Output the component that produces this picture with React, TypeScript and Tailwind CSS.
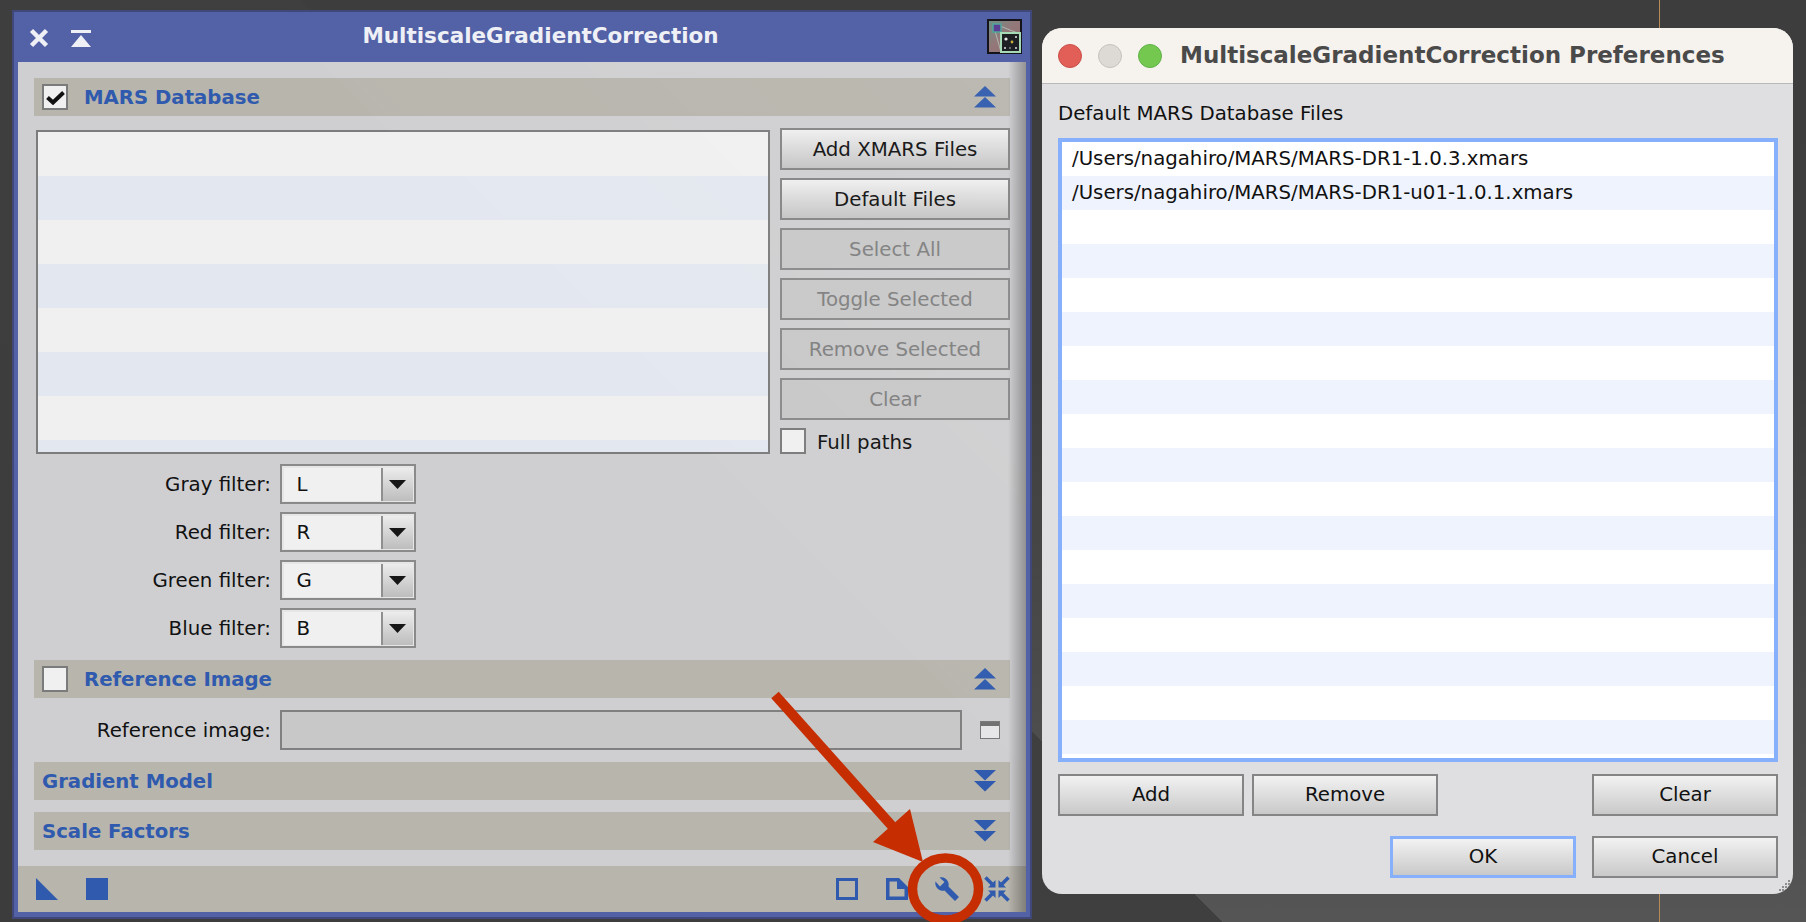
import type { ReactNode } from 'react';

function Thumbnail() {
  return (
    <svg width="35" height="35" viewBox="0 0 35 35" className="shrink-0">
      <defs>
        <linearGradient id="thumb" x1="0" y1="0" x2="1" y2="1">
          <stop offset="0" stopColor="#6f8f84" />
          <stop offset="0.45" stopColor="#93787a" />
          <stop offset="1" stopColor="#94706c" />
        </linearGradient>
      </defs>
      <rect x="0" y="0" width="35" height="35" fill="#14141a" />
      <rect x="2" y="2" width="31" height="31" fill="url(#thumb)" />
      <path d="M8 5 L33 15 M8 12 L14 33" stroke="#b9d6c8" strokeWidth="1" opacity="0.7" />
      <rect x="6" y="5" width="8" height="8" fill="#5b3f97" stroke="#4fa89a" strokeWidth="1.5" />
      <rect x="14" y="14" width="19" height="19" fill="#1d2022" stroke="#a5dab4" strokeWidth="2" />
      <circle cx="19" cy="20" r="1.6" fill="#e8e8e8" />
      <circle cx="29" cy="18" r="1" fill="#e8e8e8" />
      <circle cx="25" cy="23" r="1.4" fill="#c8b040" />
      <circle cx="18" cy="29" r="1" fill="#e0e0e0" />
      <circle cx="29" cy="29" r="1" fill="#e0e0e0" />
      <circle cx="23" cy="29" r="0.8" fill="#d0d0d0" />
    </svg>
  );
}

function Checkbox({ checked }: { checked?: boolean }) {
  return (
    <span className="flex h-[26px] w-[26px] shrink-0 items-center justify-center border-[2.5px] border-[#7b7b7b] bg-[#f0f0f0]">
      {checked && (
        <svg width="21" height="21" viewBox="0 0 21 21">
          <path d="M2.5 10.5 L8 15.5 L18.5 5.5" fill="none" stroke="#111" strokeWidth="4" />
        </svg>
      )}
    </span>
  );
}

function SectionBar({ title, open, checkbox }: { title: string; open?: boolean; checkbox?: 'on' | 'off' }) {
  return (
    <div className="flex h-[38px] shrink-0 items-center bg-[#b8b5ad] pl-2 pr-[14px]">
      {checkbox && (
        <div className="mr-[16px]">
          <Checkbox checked={checkbox === 'on'} />
        </div>
      )}
      <span className="flex-1 pt-[1px] text-[19.7px] font-bold text-[#2f5aad]">{title}</span>
      <svg width="22" height="22" viewBox="0 0 22 22" fill="#2f5aad">
        {open ? (
          <path d="M11 0 L22 10.5 L0 10.5 Z M11 11 L22 21.5 L0 21.5 Z" />
        ) : (
          <path d="M0 0 L22 0 L11 10.5 Z M0 11 L22 11 L11 21.5 Z" />
        )}
      </svg>
    </div>
  );
}

function ToolButton({ label, disabled }: { label: string; disabled?: boolean }) {
  return (
    <div
      className={
        disabled
          ? 'flex h-[42px] items-center justify-center border-[2.5px] border-[#8a8a8a] bg-[#c8c8c9] pt-[2px] text-[19.8px] text-[#808080]'
          : 'flex h-[42px] items-center justify-center border-[2.5px] border-[#858585] bg-gradient-to-b from-[#efefef] to-[#c4c4c4] pt-[2px] text-[19.8px] text-[#111]'
      }
    >
      {label}
    </div>
  );
}

function FilterRow({ label, value }: { label: string; value: string }) {
  return (
    <div className="flex h-10 items-center">
      <span className="w-[246px] pr-[9px] pt-[1px] text-right text-[19.8px] text-[#111]">{label}</span>
      <div className="flex h-10 w-[136px] border-2 border-[#8a8a8a] bg-[#e6e6e6] p-[1.5px]">
        <span className="flex-1 bg-[#f0f0f0] pl-[13px] text-[19.8px] leading-[33px] text-[#111]">{value}</span>
        <span className="flex w-[32px] items-center justify-center border-l-2 border-[#8f8f8f] bg-gradient-to-b from-[#ececec] to-[#bdbdbd]">
          <svg width="17" height="9" viewBox="0 0 17 9">
            <path d="M0 0 H17 L8.5 9 Z" fill="#161616" />
          </svg>
        </span>
      </div>
    </div>
  );
}

function PrefButton({ children, focused }: { children: ReactNode; focused?: boolean }) {
  return (
    <div
      className={
        focused
          ? 'flex h-[42px] w-[186px] items-center justify-center border-[3px] border-[#86b0fb] bg-gradient-to-b from-[#f2f2f2] to-[#c9c9c9] text-[19.75px] text-[#111]'
          : 'flex h-[42px] w-[186px] items-center justify-center border-2 border-[#858585] bg-gradient-to-b from-[#f2f2f2] to-[#c9c9c9] text-[19.75px] text-[#111]'
      }
    >
      {children}
    </div>
  );
}

const blueRow = [false, true, false, true, false, true, false, true];
const prefFiles = [
  '/Users/nagahiro/MARS/MARS-DR1-1.0.3.xmars',
  '/Users/nagahiro/MARS/MARS-DR1-u01-1.0.1.xmars',
  '', '', '', '', '', '', '', '', '', '', '', '', '', '', '', '',
];

function ProcessWindow() {
  return (
    <div className="relative flex h-[909px] w-[1020px] shrink-0 flex-col border-2 border-[#3f4878] bg-[#5361a6]">
      {/* title bar */}
      <div className="flex h-[50px] shrink-0 items-center pr-[8px] pb-[2px]">
        <div className="flex w-[80px] items-center pl-[15px]">
          <svg width="20" height="20" viewBox="0 0 20 20" className="mt-[4px]">
            <path d="M2.5 2.5 L17.5 17.5 M17.5 2.5 L2.5 17.5" stroke="#eef0f6" strokeWidth="4.5" />
          </svg>
          <svg width="20" height="17" viewBox="0 0 20 17" className="ml-[22px] mt-[4px]" fill="#eef0f6">
            <path d="M0 0 H20 V3 H0 Z M10 5 L20 17 H0 Z" />
          </svg>
        </div>
        <span className="flex-1 text-center text-[21.5px] font-bold text-[#eef0f6]">MultiscaleGradientCorrection</span>
        <Thumbnail />
      </div>

      {/* panel */}
      <div className="relative mx-1 flex flex-1 flex-col overflow-hidden bg-[#cfcfd1]">
        <div className="flex flex-1 flex-col gap-3 px-4 pt-4">
          <SectionBar title="MARS Database" open checkbox="on" />
          <div className="-mb-[2px] flex gap-[10px]">
            <div className="ml-[2px] mt-[2px] h-[324px] w-[734px] overflow-hidden border-2 border-[#7c7c7c] bg-[#f0f0f0]">
              <div className="h-[44px] bg-[#f0f0f0]" />
              {blueRow.map((isBlue, i) => (
                <div key={i} className={isBlue ? 'h-[44px] bg-[#f0f0f0]' : 'h-[44px] bg-[#e3e7ef]'} />
              ))}
            </div>
            <div className="flex w-[230px] flex-col gap-2">
              <ToolButton label="Add XMARS Files" />
              <ToolButton label="Default Files" />
              <ToolButton label="Select All" disabled />
              <ToolButton label="Toggle Selected" disabled />
              <ToolButton label="Remove Selected" disabled />
              <ToolButton label="Clear" disabled />
              <div className="flex h-[26px] items-center">
                <Checkbox />
                <span className="ml-[11px] pt-[3px] text-[19.8px] text-[#111]">Full paths</span>
              </div>
            </div>
          </div>
          <div className="flex flex-col gap-2">
            <FilterRow label="Gray filter:" value="L" />
            <FilterRow label="Red filter:" value="R" />
            <FilterRow label="Green filter:" value="G" />
            <FilterRow label="Blue filter:" value="B" />
          </div>
          <SectionBar title="Reference Image" open checkbox="off" />
          <div className="flex h-10 items-center">
            <span className="w-[246px] pr-[9px] pt-[1px] text-right text-[19.8px] text-[#111]">Reference image:</span>
            <div className="h-10 w-[682px] border-[2.5px] border-[#808080] bg-[#c8c8c8]" />
            <div className="ml-[18px] h-[18px] w-5 border border-[#777] bg-[#e6e6e8]">
              <div className="h-[4px] bg-[#6f6f6f]" />
            </div>
          </div>
          <SectionBar title="Gradient Model" />
          <SectionBar title="Scale Factors" />
        </div>

        {/* bottom toolbar */}
        <div className="flex h-[46px] shrink-0 items-center bg-[#b8b5ad] pl-[18px] pr-[16px]">
          <svg width="22" height="22" viewBox="0 0 22 22" fill="#2f5aad">
            <path d="M0 0 L22 22 H0 Z" />
          </svg>
          <div className="ml-[28px] h-[22px] w-[22px] bg-[#2f5aad]" />
          <div className="ml-auto h-[22px] w-[22px] border-[3.5px] border-[#2f5aad]" />
          <svg width="22" height="22" viewBox="0 0 22 22" className="ml-[28px]" fill="#2f5aad">
            <path fillRule="evenodd" d="M0 0 H13 L22 9 V22 H0 Z M3.5 3.5 V18.5 H18.5 V11 H11 V3.5 Z" />
          </svg>
          <svg width="26" height="26" viewBox="0 0 26 26" className="ml-[26px]" fill="#2f5aad">
            <path d="M5.5 1.5 L10.5 6 L6 10.5 L1.5 5.5 A7.5 7.5 0 0 0 10.5 14.5 L21 25 L25 21 L14.5 10.5 A7.5 7.5 0 0 0 5.5 1.5 Z" />
          </svg>
          <svg width="26" height="26" viewBox="0 0 26 26" className="ml-[24px]" fill="#2f5aad" stroke="#2f5aad">
            <path d="M1.5 1.5 L8 8 M24.5 1.5 L18 8 M1.5 24.5 L8 18 M24.5 24.5 L18 18" strokeWidth="3.5" fill="none" />
            <path d="M11.5 11.5 V4 L4 11.5 Z M14.5 11.5 V4 L22 11.5 Z M11.5 14.5 V22 L4 14.5 Z M14.5 14.5 V22 L22 14.5 Z" strokeWidth="0" />
          </svg>
        </div>

        {/* panel sheen */}
        <div className="pointer-events-none absolute inset-0 bg-[linear-gradient(45deg,rgba(255,255,255,0)_62%,rgba(255,255,255,0.02)_62%,rgba(255,255,255,0.05)_100%)]" />
        <div className="pointer-events-none absolute inset-y-0 right-0 w-[18px] bg-gradient-to-r from-transparent to-[#0000004d]" />
      </div>
      <div className="h-[5px] shrink-0" />
    </div>
  );
}

function PreferencesDialog() {
  return (
    <div className="relative flex h-[866px] w-[751px] shrink-0 flex-col overflow-hidden rounded-[20px] bg-[#dfdfe1]">
      <div className="flex h-[56px] shrink-0 items-center border-b border-[#b9b9b9] bg-[#f6f2ee] pl-[16px]">
        <span className="h-6 w-6 rounded-full border border-[#c9504a] bg-[#e25f58]" />
        <span className="ml-[16px] h-6 w-6 rounded-full border border-[#c5c2bc] bg-[#dddad5]" />
        <span className="ml-[16px] h-6 w-6 rounded-full border border-[#5fb248] bg-[#74c84f]" />
        <span className="ml-[18px] text-[23px] font-bold text-[#4a4a4a]">MultiscaleGradientCorrection Preferences</span>
      </div>
      <div className="flex flex-1 flex-col px-[16px]">
        <div className="flex h-[54px] shrink-0 items-center pt-[6px] text-[19.75px] text-[#111]">Default MARS Database Files</div>
        <div className="h-[624px] w-[720px] shrink-0 overflow-hidden border-4 border-[#86b0fb] bg-white">
          {prefFiles.map((file, i) => (
            <div
              key={i}
              className={
                i % 2 === 1
                  ? 'h-[34px] bg-[#eff3fd] pl-[10px] text-[19.75px] leading-[33px] text-[#111]'
                  : 'h-[34px] bg-white pl-[10px] text-[19.75px] leading-[33px] text-[#111]'
              }
            >
              {file}
            </div>
          ))}
        </div>
        <div className="mt-3 flex w-[720px] gap-2">
          <PrefButton>Add</PrefButton>
          <PrefButton>Remove</PrefButton>
          <div className="flex-1" />
          <PrefButton>Clear</PrefButton>
        </div>
        <div className="mt-5 flex w-[720px] justify-end gap-4">
          <PrefButton focused>OK</PrefButton>
          <PrefButton>Cancel</PrefButton>
        </div>
      </div>
      <svg width="14" height="14" viewBox="0 0 14 14" className="absolute bottom-[2px] right-[2px]" fill="#8d8d8d">
        <path d="M11 2 h2 v2 h-2 Z M8 5 h2 v2 h-2 Z M11 5 h2 v2 h-2 Z M5 8 h2 v2 h-2 Z M8 8 h2 v2 h-2 Z M11 8 h2 v2 h-2 Z M2 11 h2 v2 h-2 Z M5 11 h2 v2 h-2 Z M8 11 h2 v2 h-2 Z" />
      </svg>
    </div>
  );
}

export default function App() {
  return (
    <div className="relative h-[922px] w-[1806px] overflow-hidden bg-[linear-gradient(45deg,#3c3c3c_0%,#3f3f3f_44.8%,transparent_44.8%),linear-gradient(180deg,#3d3d3d_0%,#3e3e3e_40%,#555555_100%)] font-[family-name:'DejaVu_Sans',sans-serif]">
      <div className="absolute left-[1659px] top-0 h-full w-px bg-[#b98a55]" />
      <div className="relative flex gap-[10px] pl-[12px] pt-[10px]">
        <ProcessWindow />
        <div className="pt-[18px]">
          <PreferencesDialog />
        </div>
      </div>

      {/* red annotation */}
      <svg width="1806" height="922" viewBox="0 0 1806 922" className="pointer-events-none absolute inset-0">
        <path d="M775 695 L892 826" stroke="#c62d00" strokeWidth="10" />
        <path d="M910 809 L873 842 L923 862 Z" fill="#c62d00" />
        <ellipse cx="945.5" cy="889" rx="33" ry="31" fill="none" stroke="#c62d00" strokeWidth="9.5" />
      </svg>
    </div>
  );
}
